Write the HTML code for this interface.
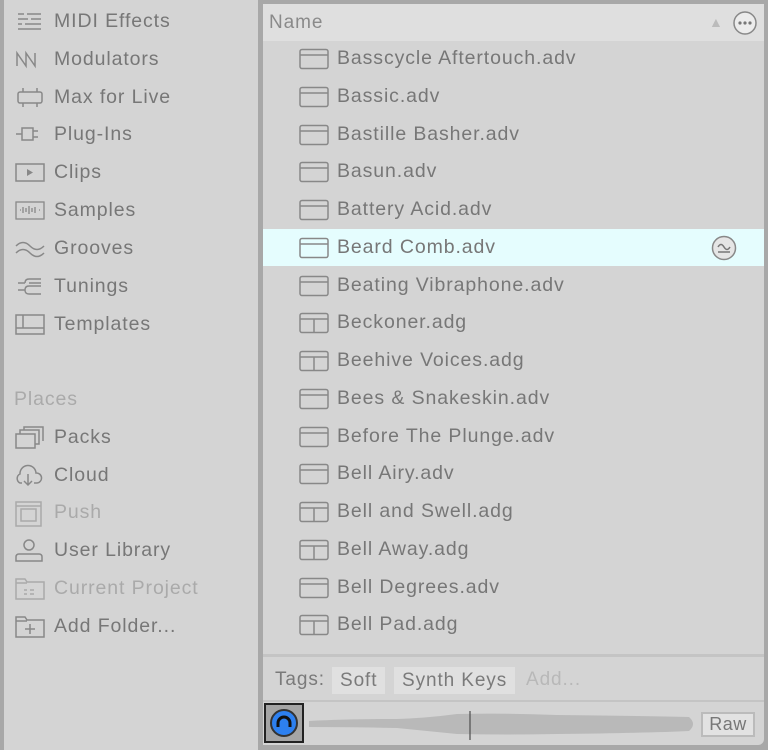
<!DOCTYPE html><html><head><style>
*{margin:0;padding:0;box-sizing:border-box}
body{width:768px;height:750px;background:#a8a8a8;font-family:"Liberation Sans",sans-serif;position:relative;overflow:hidden;color:#777;letter-spacing:0.9px}
#left{position:absolute;left:4px;top:0;width:254px;height:750px;background:#d4d4d4}
.li{position:absolute;left:0;height:30px;font-size:19.5px;line-height:30px}
.li svg{position:absolute;left:8px;top:4px}
.li span{position:absolute;left:50px;white-space:nowrap}
.dim{color:#aaa}
#right{position:absolute;left:263px;top:4px;width:501px;height:741px;background:#d4d4d4;border-radius:0 0 6px 0}
#hdr{position:absolute;left:0;top:0;width:501px;height:37px;background:#dfdfdf;font-size:19px;line-height:37px;padding-left:6px;color:#8a8a8a}
.row{position:absolute;left:0;width:501px;height:37px;font-size:19.5px;line-height:37px}
.row svg{position:absolute;left:36px;top:8px}
.row span{position:absolute;left:74px;white-space:nowrap}
.sel{background:#e5fdfe}
#tags{position:absolute;left:0;top:650px;width:501px;height:48px;border-top:3px solid #c4c4c4;border-bottom:2px solid #c4c4c4;font-size:19px;line-height:45px}
.tag{position:absolute;top:10px;height:27px;line-height:27px;background:#e0e0e0;padding:0 8px;color:#7a7a7a}
</style></head><body>
<div id="left">
<div class="li" style="top:6px"><svg width="36" height="22" fill="none" stroke="#888" stroke-width="1.4"><path d="M6 4h6M15 4h14M6 9h10M19 9h10M6 14h4M13 14h16M6 19h23"/></svg><span>MIDI Effects</span></div>
<div class="li" style="top:44px"><svg width="36" height="22" fill="none" stroke="#888" stroke-width="1.5"><path d="M5 18V5l9 13V5l9 13V5"/></svg><span>Modulators</span></div>
<div class="li" style="top:82px"><svg width="36" height="22" fill="none" stroke="#888" stroke-width="1.5"><rect x="6" y="6" width="24" height="11" rx="2"/><path d="M11 2v4M25 2v4M11 17v4M25 17v4"/></svg><span>Max for Live</span></div>
<div class="li" style="top:119px"><svg width="36" height="22" fill="none" stroke="#888" stroke-width="1.5"><path d="M4 11h6M10 5h11v12h-11zM21 8h5M21 14h5"/></svg><span>Plug-Ins</span></div>
<div class="li" style="top:157px"><svg width="36" height="22" fill="none" stroke="#888" stroke-width="1.5"><rect x="4" y="3" width="28" height="17"/><path d="M15 8v7l6-3.5z" fill="#888" stroke="none"/></svg><span>Clips</span></div>
<div class="li" style="top:195px"><svg width="36" height="22" fill="none" stroke="#888" stroke-width="1.3"><rect x="4" y="3" width="28" height="17"/><path d="M8 11h1M11 8v6M14 9v4M17 7v8M20 9v4M23 8v6M27 11h1"/></svg><span>Samples</span></div>
<div class="li" style="top:233px"><svg width="36" height="22" fill="none" stroke="#888" stroke-width="1.5"><path d="M4 9q7-7 14 0t14 0M4 16q7-7 14 0t14 0"/></svg><span>Grooves</span></div>
<div class="li" style="top:271px"><svg width="36" height="22" fill="none" stroke="#888" stroke-width="1.4"><path d="M6 8h7M6 15h7M17 4h12M13 8q0-4 4-4M17 8h12M17 11h12M13 15q0-4 4-4M13 15q0 4 4 4h12"/></svg><span>Tunings</span></div>
<div class="li" style="top:309px"><svg width="36" height="22" fill="none" stroke="#888" stroke-width="1.5"><rect x="4" y="2" width="28" height="19"/><path d="M4 15h28M11 2v13"/></svg><span>Templates</span></div>
<div class="li dim" style="top:384px;"><span style="left:10px">Places</span></div>
<div class="li" style="top:422px"><svg width="36" height="24" fill="none" stroke="#888" stroke-width="1.5"><rect x="4" y="8" width="19" height="14"/><path d="M8 8V4h19v14h-4M12 4V1h19v14"/></svg><span>Packs</span></div>
<div class="li" style="top:460px"><svg width="36" height="24" fill="none" stroke="#888" stroke-width="1.5"><path d="M10 19H8a5 5 0 0 1 0-9 8 8 0 0 1 16-1 5 5 0 0 1 1 10h-3M16 10v10M12 17l4 4 4-4"/></svg><span>Cloud</span></div>
<div class="li dim" style="top:497px"><svg width="36" height="26" fill="none" stroke="#aaa" stroke-width="1.5"><rect x="4" y="1" width="25" height="24"/><rect x="9" y="8" width="15" height="12"/><path d="M4 5h25"/></svg><span>Push</span></div>
<div class="li" style="top:535px"><svg width="36" height="24" fill="none" stroke="#888" stroke-width="1.5"><circle cx="17" cy="6" r="5"/><path d="M4 22v-4q0-3 3-3h20q3 0 3 3v4z"/></svg><span>User Library</span></div>
<div class="li dim" style="top:573px"><svg width="36" height="24" fill="none" stroke="#aaa" stroke-width="1.5"><path d="M4 22V2h9l2 3h17v17zM4 6h11M12 13h3M18 13h4M12 17h3M18 17h4"/></svg><span>Current Project</span></div>
<div class="li" style="top:611px"><svg width="36" height="24" fill="none" stroke="#888" stroke-width="1.5"><path d="M4 22V2h9l2 3h17v17zM4 6h11M18 9v10M13 14h10"/></svg><span>Add Folder...</span></div>
</div>
<div id="right">
<div id="hdr">Name<span style="position:absolute;left:446px;top:0;color:#bbb;font-size:14px">▲</span><svg style="position:absolute;left:470px;top:7px" width="24" height="24"><circle cx="12" cy="12" r="11" fill="#ececec" stroke="#888" stroke-width="1.5"/><circle cx="7" cy="12" r="1.6" fill="#777"/><circle cx="12" cy="12" r="1.6" fill="#777"/><circle cx="17" cy="12" r="1.6" fill="#777"/></svg></div>
<div id="rows"></div>
<div id="tags"><span style="position:absolute;left:12px;color:#7a7a7a">Tags:</span><span class="tag" style="left:69px">Soft</span><span class="tag" style="left:131px">Synth Keys</span><span style="position:absolute;left:263px;color:#b8b8b8">Add...</span></div>
<div style="position:absolute;left:0;top:698px;width:501px;height:43px">
<div style="position:absolute;left:1px;top:1px;width:40px;height:40px;background:#a5a5a5;border:2px solid #222"><svg width="36" height="36"><circle cx="18" cy="18" r="13" fill="#2d80f0" stroke="#333" stroke-width="2"/><path d="M12 22v-4a6 6 0 0 1 12 0v4" fill="none" stroke="#111" stroke-width="3"/></svg></div>
<svg style="position:absolute;left:44px;top:6px" width="390" height="32"><path d="M2 13Q40 11 90 11Q120 10 150 6Q200 5 250 7Q340 8 382 9Q390 16 382 23Q340 25 250 26Q200 27 150 26Q120 23 90 20Q40 19 2 19Z" fill="#b9b9b9"/><path d="M163 3v29" stroke="#555" stroke-width="1.3"/></svg>
<div style="position:absolute;left:438px;top:10px;width:54px;height:25px;border:2px solid #bbb;background:#e2e2e2;font-size:18px;line-height:21px;text-align:center;color:#777;letter-spacing:0.5px">Raw</div>
</div>
</div>
<script>
var n=["Basscycle Aftertouch.adv","Bassic.adv","Bastille Basher.adv","Basun.adv","Battery Acid.adv","Beard Comb.adv","Beating Vibraphone.adv","Beckoner.adg","Beehive Voices.adg","Bees & Snakeskin.adv","Before The Plunge.adv","Bell Airy.adv","Bell and Swell.adg","Bell Away.adg","Bell Degrees.adv","Bell Pad.adg"];
var h="";n.forEach(function(s,i){var t=36+i*37.75;var g=s.slice(-3)=="adg";
h+='<div class="row'+(i==5?' sel':'')+'" style="top:'+t+'px"><svg width="32" height="22" fill="none" stroke="#888" stroke-width="1.5"><rect x="1" y="1.5" width="28" height="19" rx="2"/><path d="M1 7h28'+(g?'M15 7v13.5':'')+'"/></svg><span>'+s.replace("&","&amp;")+'</span>'+(i==5?'<svg style="left:448px;top:6px" width="26" height="26"><circle cx="13" cy="13" r="11.5" fill="#e5e5e5" stroke="#888" stroke-width="1.5"/><path d="M7 12q3-5 6 0t6 0M7 17h12" stroke="#777" stroke-width="1.5" fill="none"/></svg>':'')+'</div>';});
document.getElementById("rows").innerHTML=h;
</script>
</body></html>
